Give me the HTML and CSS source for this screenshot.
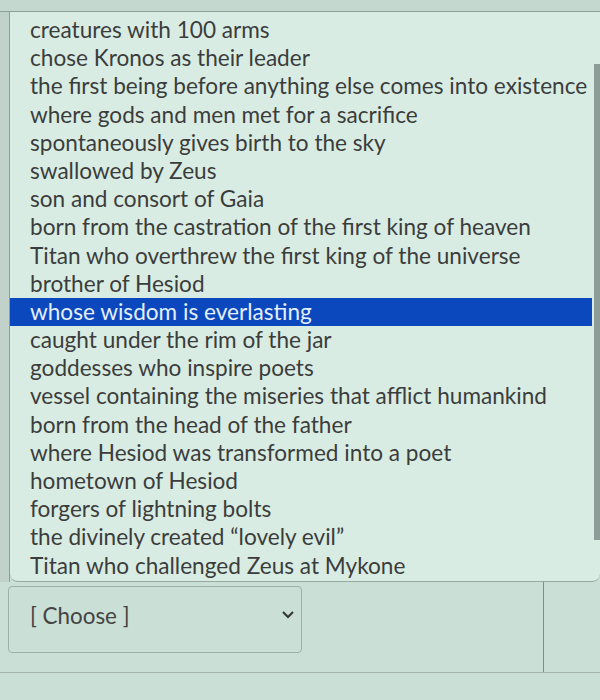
FILE: index.html
```html
<!DOCTYPE html>
<html>
<head>
<meta charset="utf-8">
<link rel="stylesheet" href="styles.css">
</head>
<body>
<div class="topbar"></div>
<div class="main">
  <div class="gutter"></div>
  <div class="listbox">
    <ul class="options">
      <li>creatures with 100 arms</li>
      <li>chose Kronos as their leader</li>
      <li>the ﬁrst being before anything else comes into existence</li>
      <li>where gods and men met for a sacriﬁce</li>
      <li>spontaneously gives birth to the sky</li>
      <li>swallowed by Zeus</li>
      <li>son and consort of Gaia</li>
      <li>born from the castration of the ﬁrst king of heaven</li>
      <li>Titan who overthrew the ﬁrst king of the universe</li>
      <li>brother of Hesiod</li>
      <li class="selected">whose wisdom is everlasting</li>
      <li>caught under the rim of the jar</li>
      <li>goddesses who inspire poets</li>
      <li>vessel containing the miseries that aﬄict humankind</li>
      <li>born from the head of the father</li>
      <li>where Hesiod was transformed into a poet</li>
      <li>hometown of Hesiod</li>
      <li>forgers of lightning bolts</li>
      <li>the divinely created “lovely evil”</li>
      <li>Titan who challenged Zeus at Mykone</li>
    </ul>
    <div class="scrollbar"><div class="thumb"></div></div>
  </div>
</div>
<div class="bottom">
  <div class="select">
    <span class="select-label">[ Choose ]</span>
    <svg class="chevron" width="14" height="10" viewBox="0 0 14 10"><path d="M2 2 L7 7 L12 2" fill="none" stroke="#333" stroke-width="2"/></svg>
  </div>
  <div class="spacer"></div>
  <div class="right-cell"></div>
</div>
<div class="lower-row"></div>
</body>
</html>
```

FILE: styles.css
```css
html, body {
  margin: 0;
  padding: 0;
}
body {
  width: 600px;
  height: 700px;
  overflow: hidden;
  background: #cadfd5;
  font-family: Lato, "Open Sans", sans-serif;
  color: #3b3d3c;
}
.topbar {
  height: 11px;
  border-bottom: 1px solid #8e9e98;
  background: #c4d8cf;
}
.main {
  display: flex;
}
.gutter {
  width: 9px;
  background: #c0d2ca;
  border-right: 1px solid #8f9d98;
}
.listbox {
  flex: 1;
  display: flex;
  height: 570px;
  background: #d9ece3;
  border-bottom: 1px solid #98a8a1;
  border-radius: 0 0 8px 8px;
  box-sizing: border-box;
}
.options {
  list-style: none;
  margin: 0;
  padding: 4px 0 0 0;
  flex: 1;
}
.options li {
  height: 28.2px;
  line-height: 28.2px;
  font-size: 22.6px;
  padding-left: 20px;
  white-space: nowrap;
}
.options li.selected {
  background: #0b48bd;
  color: #e4efff;
}
.scrollbar {
  width: 8px;
  padding-top: 52px;
  box-sizing: border-box;
}
.thumb {
  margin-left: 2px;
  width: 6px;
  height: 476px;
  background: #8c9c97;
}
.bottom {
  display: flex;
  height: 86px;
  padding-top: 4px;
  border-bottom: 1px solid #a4b4ad;
}
.select {
  margin-left: 8px;
  width: 294px;
  height: 67px;
  box-sizing: border-box;
  border: 1px solid #9fb0a8;
  border-radius: 4px;
  display: flex;
  align-items: center;
  justify-content: space-between;
  padding: 0 6px 0 21px;
}
.select-label {
  font-size: 22.4px;
  color: #444;
  margin-top: -9px;
}
.chevron {
  margin-top: -9px;
}
.spacer {
  width: 241px;
}
.right-cell {
  flex: 1;
  border-left: 1px solid #7e8e88;
  margin-top: -4px;
}
.lower-row {
  height: 30px;
}
```
